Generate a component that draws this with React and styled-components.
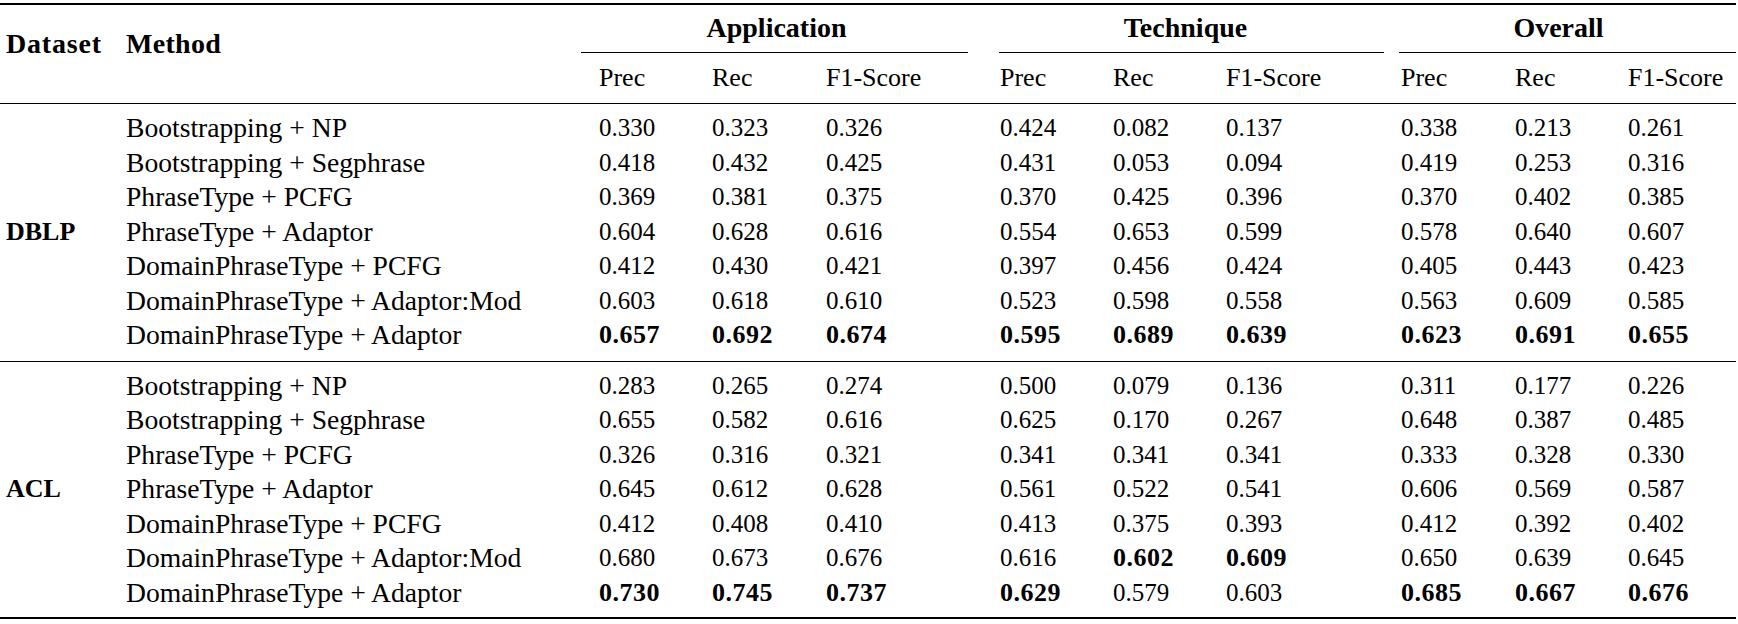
import React from "react";
import styled, { createGlobalStyle, css } from "styled-components";

const GlobalStyle = createGlobalStyle`
  html, body {
    margin: 0;
    padding: 0;
    background: #ffffff;
  }
  body {
    font-family: "Liberation Serif", "Times New Roman", serif;
    color: #000000;
  }
`;

const columns = css`
  display: grid;
  grid-template-columns: 126px 473px 113px 114px 174px 113px 113px 175px 114px 113px 108px;
`;

const Table = styled.div`
  width: 1736px;
  margin-top: 3px;
  border-top: 2px solid #000;
  border-bottom: 2px solid #000;
`;

const HeadGrid = styled.div`
  ${columns};
  grid-template-rows: 49px 49px;
`;

const CornerHead = styled.div`
  grid-row: 1 / span 2;
  grid-column: ${(p) => p.$col};
  align-self: start;
  padding-top: 24px;
  padding-left: ${(p) => (p.$col === 1 ? "6px" : "0")};
  font-size: 28px;
  font-weight: 700;
  line-height: 30px;
  letter-spacing: ${(p) => (p.$col === 1 ? "0.8px" : "0.3px")};
  white-space: nowrap;
`;

const GroupHead = styled.div`
  grid-row: 1;
  grid-column: ${(p) => p.$start} / span 3;
  margin-left: ${(p) => -p.$trimL}px;
  margin-right: ${(p) => p.$trimR}px;
  height: 48px;
  box-sizing: border-box;
  padding-top: 8px;
  padding-left: ${(p) => Math.max(0, p.$shift * 2)}px;
  padding-right: ${(p) => Math.max(0, -p.$shift * 2)}px;
  border-bottom: 1px solid #000;
  text-align: center;
  font-size: 28px;
  font-weight: 700;
  line-height: 30px;
  white-space: nowrap;
`;

const SubHead = styled.div`
  grid-row: 2;
  padding-top: 9px;
  font-size: 26px;
  line-height: 30px;
  white-space: nowrap;
`;

const Rule = styled.div`
  height: 1px;
  background: #000;
`;

const Section = styled.div`
  display: flex;
  flex-direction: column;
  padding-top: ${(p) => p.$top}px;
  padding-bottom: ${(p) => p.$bottom}px;
`;

const Row = styled.div`
  ${columns};
  height: 34.5px;
  line-height: 34.5px;
  white-space: nowrap;
`;

const DatasetCell = styled.div`
  padding-left: 6px;
  font-size: 26px;
  font-weight: 700;
`;

const MethodCell = styled.div`
  font-size: 27.6px;
`;

const ValueCell = styled.div`
  font-size: ${(p) => (p.$bold ? "26px" : "25px")};
  font-weight: ${(p) => (p.$bold ? 700 : 400)};
  letter-spacing: ${(p) => (p.$bold ? "0.5px" : "0")};
`;

const methods = [
  "Bootstrapping + NP",
  "Bootstrapping + Segphrase",
  "PhraseType + PCFG",
  "PhraseType + Adaptor",
  "DomainPhraseType + PCFG",
  "DomainPhraseType + Adaptor:Mod",
  "DomainPhraseType + Adaptor",
];

const datasets = [
  {
    name: "DBLP",
    top: 7,
    bottom: 8,
    rows: [
      "0.330 0.323 0.326 0.424 0.082 0.137 0.338 0.213 0.261",
      "0.418 0.432 0.425 0.431 0.053 0.094 0.419 0.253 0.316",
      "0.369 0.381 0.375 0.370 0.425 0.396 0.370 0.402 0.385",
      "0.604 0.628 0.616 0.554 0.653 0.599 0.578 0.640 0.607",
      "0.412 0.430 0.421 0.397 0.456 0.424 0.405 0.443 0.423",
      "0.603 0.618 0.610 0.523 0.598 0.558 0.563 0.609 0.585",
      "*0.657 *0.692 *0.674 *0.595 *0.689 *0.639 *0.623 *0.691 *0.655",
    ],
  },
  {
    name: "ACL",
    top: 7,
    bottom: 7,
    rows: [
      "0.283 0.265 0.274 0.500 0.079 0.136 0.311 0.177 0.226",
      "0.655 0.582 0.616 0.625 0.170 0.267 0.648 0.387 0.485",
      "0.326 0.316 0.321 0.341 0.341 0.341 0.333 0.328 0.330",
      "0.645 0.612 0.628 0.561 0.522 0.541 0.606 0.569 0.587",
      "0.412 0.408 0.410 0.413 0.375 0.393 0.412 0.392 0.402",
      "0.680 0.673 0.676 0.616 *0.602 *0.609 0.650 0.639 0.645",
      "*0.730 *0.745 *0.737 *0.629 0.579 0.603 *0.685 *0.667 *0.676",
    ],
  },
];

const groups = [
  { title: "Application", start: 3, trimL: 18, trimR: 32, shift: 2 },
  { title: "Technique", start: 6, trimL: 1, trimR: 17, shift: -6 },
  { title: "Overall", start: 9, trimL: 2, trimR: 0, shift: -9 },
];

const subs = ["Prec", "Rec", "F1-Score"];

export default function App() {
  return (
    <>
      <GlobalStyle />
      <Table>
        <HeadGrid>
          <CornerHead $col={1}>Dataset</CornerHead>
          <CornerHead $col={2}>Method</CornerHead>
          {groups.map((g) => (
            <GroupHead
              key={g.title}
              $start={g.start}
              $trimL={g.trimL}
              $trimR={g.trimR}
              $shift={g.shift}
            >
              {g.title}
            </GroupHead>
          ))}
          {groups.map((g) =>
            subs.map((s) => <SubHead key={g.title + s}>{s}</SubHead>)
          )}
        </HeadGrid>
        {datasets.map((d) => (
          <React.Fragment key={d.name}>
            <Rule />
            <Section $top={d.top} $bottom={d.bottom}>
              {d.rows.map((r, i) => (
                <Row key={i}>
                  <DatasetCell>{i === 3 ? d.name : ""}</DatasetCell>
                  <MethodCell>{methods[i]}</MethodCell>
                  {r.split(" ").map((v, j) => {
                    const bold = v.startsWith("*");
                    return (
                      <ValueCell key={j} $bold={bold}>
                        {bold ? v.slice(1) : v}
                      </ValueCell>
                    );
                  })}
                </Row>
              ))}
            </Section>
          </React.Fragment>
        ))}
      </Table>
    </>
  );
}
